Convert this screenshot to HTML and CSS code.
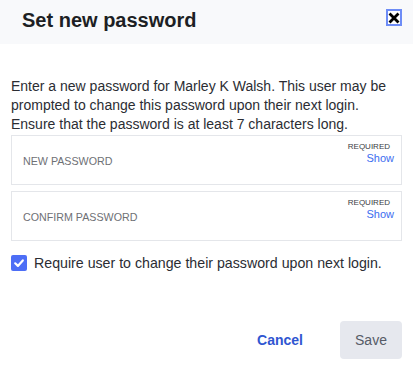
FILE: index.html
```html
<!DOCTYPE html>
<html>
<head>
<meta charset="utf-8">
<link rel="stylesheet" href="styles.css">
</head>
<body>
<div class="modal">
  <div class="header">
    <h1 class="title">Set new password</h1>
    <button class="close" aria-label="Close">
      <svg width="12" height="12" viewBox="0 0 12 12"><path d="M2.5 2.5 L9.5 9.5 M9.5 2.5 L2.5 9.5" stroke="#000" stroke-width="2.8" stroke-linecap="square"/></svg>
    </button>
  </div>
  <div class="content">
    <p class="intro">Enter a new password for Marley K Walsh. This user may be prompted to change this password upon their next login. Ensure that the password is at least 7 characters long.</p>
    <div class="field">
      <span class="label">NEW PASSWORD</span>
      <div class="meta"><span class="req">REQUIRED</span><span class="show">Show</span></div>
    </div>
    <div class="field">
      <span class="label">CONFIRM PASSWORD</span>
      <div class="meta"><span class="req">REQUIRED</span><span class="show">Show</span></div>
    </div>
    <label class="check-row">
      <span class="checkbox"><svg width="16" height="16" viewBox="0 0 16 16"><path d="M4.2 8.3 L6.9 10.9 L11.8 5.4" fill="none" stroke="#fff" stroke-width="2.2" stroke-linecap="round" stroke-linejoin="round"/></svg></span>
      <span class="check-text">Require user to change their password upon next login.</span>
    </label>
    <div class="actions">
      <button class="btn cancel">Cancel</button>
      <button class="btn save">Save</button>
    </div>
  </div>
</div>
</body>
</html>
```

FILE: styles.css
```css
html, body {
  margin: 0;
  padding: 0;
  background: #ffffff;
}
body {
  font-family: "Liberation Sans", Arial, sans-serif;
  color: #2b2d33;
}
.modal {
  width: 413px;
}
.header {
  height: 44px;
  box-sizing: border-box;
  background: #f8f9fb;
  display: flex;
  justify-content: space-between;
  align-items: flex-start;
  padding: 8px 11px 0 22px;
}
.title {
  margin: 0;
  font-size: 20px;
  line-height: 24px;
  font-weight: bold;
  color: #1d1f24;
}
.close {
  margin-top: 1px;
  width: 16px;
  height: 17px;
  box-sizing: border-box;
  border: 2px solid #6d8cf6;
  background: #ffffff;
  padding: 0;
  display: flex;
  align-items: center;
  justify-content: center;
}
.content {
  padding: 0 11px;
}
.intro {
  margin: 33px 0 1px;
  font-size: 14px;
  line-height: 19px;
  color: #2b2d33;
}
.field {
  height: 50px;
  box-sizing: border-box;
  border: 1px solid #e4e6ea;
  display: flex;
  justify-content: space-between;
  align-items: flex-start;
  padding: 6px 7px 0 11px;
  margin-bottom: 6px;
}
.label {
  margin-top: 13px;
  font-size: 10.7px;
  line-height: 13px;
  color: #6e7075;
}
.meta {
  display: flex;
  flex-direction: column;
  align-items: flex-end;
}
.req {
  font-size: 8px;
  line-height: 10px;
  color: #3a3c42;
  margin-right: 4px;
}
.show {
  font-size: 11px;
  line-height: 13px;
  color: #3d6ef0;
}
.check-row {
  display: flex;
  align-items: center;
  gap: 7px;
  margin-top: 14px;
  height: 16px;
}
.checkbox {
  width: 16px;
  height: 16px;
  border-radius: 2px;
  background: #4d6ef6;
  display: flex;
}
.check-text {
  font-size: 14.2px;
  line-height: 19px;
  color: #2b2d33;
}
.actions {
  display: flex;
  justify-content: flex-end;
  align-items: center;
  margin-top: 50px;
}
.btn {
  height: 38px;
  border: none;
  font-family: "Liberation Sans", Arial, sans-serif;
  font-size: 14px;
  border-radius: 4px;
  cursor: pointer;
}
.cancel {
  background: transparent;
  color: #2f56d1;
  font-weight: bold;
  padding: 0 16px;
  margin-right: 21px;
}
.save {
  background: #e6e8ee;
  color: #565b67;
  padding: 0 15px;
  width: 62px;
}
```
